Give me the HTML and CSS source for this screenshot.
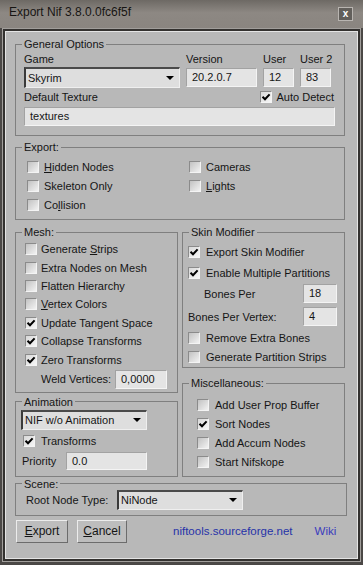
FILE: index.html
```html
<!DOCTYPE html>
<html lang="en">

<head>
    <meta charset="UTF-8">
    <title>Export Nif 3.8.0.0fc6f5f</title>
    <link rel="stylesheet" href="styles.css">
</head>

<body>
    <div class="window">
        <div class="titlebar">
            <span class="title">Export Nif 3.8.0.0fc6f5f</span>
            <span class="close">x</span>
        </div>

        <div class="client">
            <div class="panel">

                <fieldset class="group general">
                    <legend>General Options</legend>
                    <div class="general-grid">
                        <span>Game</span>
                        <span>Version</span>
                        <span>User</span>
                        <span>User 2</span>
                        <div class="combo">Skyrim<i class="arrow"></i></div>
                        <div class="field">20.2.0.7</div>
                        <div class="field">12</div>
                        <div class="field">83</div>
                    </div>
                    <div class="texture-row">
                        <span>Default Texture</span>
                        <label class="check">
                            <span class="box on"><svg viewBox="0 0 10 10"><path d="M1.5 4.8 L4 7.3 L8.6 2.4" /></svg></span>
                            Auto Detect
                        </label>
                    </div>
                    <div class="field texture">textures</div>
                </fieldset>

                <fieldset class="group export">
                    <legend>Export:</legend>
                    <div class="export-grid">
                        <label class="check"><span class="box"></span><span><u>H</u>idden Nodes</span></label>
                        <label class="check"><span class="box"></span>Cameras</label>
                        <label class="check"><span class="box"></span>Skeleton Only</label>
                        <label class="check"><span class="box"></span><span><u>L</u>ights</span></label>
                        <label class="check"><span class="box"></span><span>Co<u>l</u>lision</span></label>
                    </div>
                </fieldset>

                <div class="columns">
                    <div class="col">
                        <fieldset class="group mesh">
                            <legend>Mesh:</legend>
                            <div class="list">
                                <label class="check"><span class="box"></span><span>Generate <u>S</u>trips</span></label>
                                <label class="check"><span class="box"></span>Extra Nodes on Mesh</label>
                                <label class="check"><span class="box"></span>Flatten Hierarchy</label>
                                <label class="check"><span class="box"></span><span><u>V</u>ertex Colors</span></label>
                                <label class="check"><span class="box on"><svg viewBox="0 0 10 10"><path d="M1.5 4.8 L4 7.3 L8.6 2.4" /></svg></span>Update Tangent Space</label>
                                <label class="check"><span class="box on"><svg viewBox="0 0 10 10"><path d="M1.5 4.8 L4 7.3 L8.6 2.4" /></svg></span>Collapse Transforms</label>
                                <label class="check"><span class="box on"><svg viewBox="0 0 10 10"><path d="M1.5 4.8 L4 7.3 L8.6 2.4" /></svg></span>Zero Transforms</label>
                            </div>
                            <div class="weld-row">
                                <span>Weld Vertices:</span>
                                <span class="field">0,0000</span>
                            </div>
                        </fieldset>

                        <fieldset class="group anim">
                            <legend>Animation</legend>
                            <div class="combo anim-combo">NIF w/o Animation<i class="arrow"></i></div>
                            <label class="check"><span class="box on"><svg viewBox="0 0 10 10"><path d="M1.5 4.8 L4 7.3 L8.6 2.4" /></svg></span>Transforms</label>
                            <div class="prio-row">
                                <span>Priority</span>
                                <span class="field">0.0</span>
                            </div>
                        </fieldset>
                    </div>

                    <div class="col">
                        <fieldset class="group skin">
                            <legend>Skin Modifier</legend>
                            <label class="check first"><span class="box on"><svg viewBox="0 0 10 10"><path d="M1.5 4.8 L4 7.3 L8.6 2.4" /></svg></span>Export Skin Modifier</label>
                            <label class="check"><span class="box on"><svg viewBox="0 0 10 10"><path d="M1.5 4.8 L4 7.3 L8.6 2.4" /></svg></span>Enable Multiple Partitions</label>
                            <div class="num-row indent">
                                <span>Bones Per</span>
                                <span class="field num">18</span>
                            </div>
                            <div class="num-row vertex">
                                <span>Bones Per Vertex:</span>
                                <span class="field num">4</span>
                            </div>
                            <label class="check low gap"><span class="box"></span>Remove Extra Bones</label>
                            <label class="check low"><span class="box"></span>Generate Partition Strips</label>
                        </fieldset>

                        <fieldset class="group misc">
                            <legend>Miscellaneous:</legend>
                            <div class="list">
                                <label class="check"><span class="box"></span>Add User Prop Buffer</label>
                                <label class="check"><span class="box on"><svg viewBox="0 0 10 10"><path d="M1.5 4.8 L4 7.3 L8.6 2.4" /></svg></span>Sort Nodes</label>
                                <label class="check"><span class="box"></span>Add Accum Nodes</label>
                                <label class="check"><span class="box"></span>Start Nifskope</label>
                            </div>
                        </fieldset>
                    </div>
                </div>

                <fieldset class="group scene">
                    <legend>Scene:</legend>
                    <div class="scene-row">
                        <span>Root Node Type:</span>
                        <div class="combo">NiNode<i class="arrow"></i></div>
                    </div>
                </fieldset>

                <div class="footer">
                    <button class="btn export-btn" type="button"><u>E</u>xport</button>
                    <button class="btn cancel-btn" type="button"><u>C</u>ancel</button>
                    <a class="link site" href="#">niftools.sourceforge.net</a>
                    <a class="link wiki" href="#">Wiki</a>
                </div>

            </div>
        </div>
    </div>
</body>

</html>
```

FILE: styles.css
```css
/* styles.css */

body {
    margin: 0;
    background-color: #3f3d3b;
    font-family: "Liberation Sans", Arial, sans-serif;
    font-size: 11px;
    color: #151515;
}

.window {
    width: 363px;
    height: 565px;
    display: flex;
    flex-direction: column;
    background-color: #4b4846;
}

/* title bar */

.titlebar {
    height: 28px;
    flex: none;
    box-sizing: border-box;
    display: flex;
    justify-content: space-between;
    align-items: flex-start;
    padding: 5px 9px 0 9px;
    background: linear-gradient(#6d6964, #8d8883 45%, #8a8580);
}

.title {
    font-size: 12px;
    line-height: 15px;
    color: #171513;
}

.close {
    width: 15px;
    height: 14px;
    box-sizing: border-box;
    margin-top: 2px;
    margin-right: 1px;
    border: 1px solid #b9b5b1;
    background-color: #625f5b;
    color: #fff;
    font-weight: bold;
    font-size: 10px;
    line-height: 11px;
    text-align: center;
}

/* window frame */

.client {
    flex: 1;
    display: flex;
    margin: 0 2px 3px 2px;
    border: 1px solid #a19e9b;
}

.panel {
    flex: 1;
    border: 2px solid #33312f;
    box-shadow: inset 1px 1px 0 #e4e4e4, inset -1px -1px 0 #e4e4e4;
    background-color: #b8b8b8;
    padding: 6px 13px 0 10px;
}

/* group boxes */

.group {
    margin: 0;
    padding: 0 9px 7px 8px;
    border: 1px solid #7f7f7f;
    min-width: 0;
}

.group legend {
    padding: 0 2px;
    margin-left: -2px;
    line-height: 14px;
}

/* controls */

.field {
    display: block;
    height: 19px;
    box-sizing: border-box;
    background-color: #e4e4e4;
    border: 1px solid;
    border-color: #a2a2a2 #f4f4f4 #f4f4f4 #a2a2a2;
    padding: 0 5px;
    line-height: 17px;
}

.combo {
    height: 21px;
    box-sizing: border-box;
    display: flex;
    align-items: center;
    justify-content: space-between;
    padding: 0 5px 0 2px;
    background-color: #dedede;
    border-style: solid;
    border-width: 2px 1px 1px 2px;
    border-color: #4a4a4a #efefef #efefef #3a3a3a;
}

.arrow {
    width: 0;
    height: 0;
    border-left: 4px solid transparent;
    border-right: 4px solid transparent;
    border-top: 4px solid #000;
}

.check {
    display: flex;
    align-items: center;
    gap: 5px;
}

.box {
    width: 12px;
    height: 12px;
    flex: none;
    box-sizing: border-box;
    display: flex;
    align-items: center;
    justify-content: center;
    border: 1px solid;
    border-color: #8b8b8b #f4f4f4 #f4f4f4 #8b8b8b;
    background: linear-gradient(135deg, #c2c2c2, #f2f2f2);
}

.box.on {
    background: linear-gradient(135deg, #d8d8d8, #f6f6f6);
}

.box svg {
    width: 10px;
    height: 10px;
}

.box svg path {
    fill: none;
    stroke: #000;
    stroke-width: 2;
}

/* general options */

.general {
    padding-bottom: 9px;
}

.general-grid {
    display: grid;
    grid-template-columns: 156px 71px 31px 31px;
    grid-template-rows: 14px 21px;
    column-gap: 6px;
    row-gap: 1px;
    align-items: center;
    padding-top: 1px;
}

.general-grid span {
    line-height: 14px;
    white-space: nowrap;
}

.texture-row {
    height: 18px;
    display: flex;
    align-items: center;
    justify-content: space-between;
}

.texture-row .check {
    margin-right: 1px;
}

.texture {
    margin-top: 1px;
}

/* export */

.export {
    margin-top: 4px;
    padding-bottom: 5px;
}

.export-grid {
    display: grid;
    grid-template-columns: 162px 1fr;
    grid-auto-rows: 19px;
    padding-top: 3px;
}

.export-grid .check {
    margin-left: 3px;
}

/* mesh / skin columns */

.columns {
    display: grid;
    grid-template-columns: 163px 163px;
    column-gap: 4px;
    margin-top: 5px;
}

.col {
    display: flex;
    flex-direction: column;
}

.mesh {
    padding-bottom: 3px;
}

.mesh .list {
    padding-top: 1px;
}

.mesh .check {
    height: 18.4px;
    margin-left: 1px;
    gap: 4px;
}

.weld-row {
    display: grid;
    grid-template-columns: 74px 52px;
    align-items: center;
    margin: 1px 0 0 17px;
}

.anim {
    flex: 1;
    margin-top: 2px;
    padding-bottom: 5px;
}

.anim-combo {
    width: 126px;
    height: 20px;
    margin: 1px 0 0 -3px;
}

.anim .check {
    height: 18px;
    margin: 2px 0 0 -1px;
    gap: 6px;
}

.prio-row {
    display: grid;
    grid-template-columns: 44px 81px;
    align-items: center;
    height: 19px;
    margin: 2px 0 0 -2px;
}

.prio-row .field {
    height: 18px;
    line-height: 16px;
}

.skin {
    padding: 0 7px 1px 8px;
}

.skin .check {
    height: 20px;
    margin: 1px 0 0 -3px;
    gap: 6px;
}

.skin .check.first {
    margin-top: 3px;
}

.skin .check.low {
    height: 19px;
    margin-top: 0;
}

.skin .check.gap {
    margin-top: 2px;
}

.num-row {
    display: flex;
    align-items: center;
    justify-content: space-between;
    height: 19px;
    margin-left: -3px;
}

.num-row.indent {
    margin-top: 1px;
    padding-left: 16px;
}

.num-row.vertex {
    margin-top: 4px;
}

.num {
    width: 34px;
}

.misc {
    flex: 1;
    margin-top: 8px;
    padding-bottom: 4px;
}

.misc .list {
    padding-top: 5px;
}

.misc .check {
    height: 19px;
    margin-left: 6px;
    gap: 6px;
}

/* scene */

.scene {
    margin: 0 -2px 0 0;
    padding-bottom: 5px;
}

.scene-row {
    display: grid;
    grid-template-columns: 91px 126px;
    align-items: center;
    margin: -1px 0 0 2px;
}

.scene-row .combo {
    height: 20px;
}

/* footer */

.footer {
    display: flex;
    align-items: center;
    margin-top: 4px;
    padding-left: 1px;
}

.btn {
    height: 23px;
    box-sizing: border-box;
    padding: 0;
    background-color: #bdbdbd;
    border: 1px solid;
    border-color: #ececec #6c6c6c #6c6c6c #ececec;
    font-family: "Liberation Sans", Arial, sans-serif;
    font-size: 12px;
    color: #151515;
}

.export-btn {
    width: 52px;
}

.cancel-btn {
    width: 50px;
    margin-left: 9px;
}

.link {
    font-size: 11.5px;
    text-decoration: none;
}

.site {
    margin-left: 46px;
    color: #2633a8;
}

.wiki {
    margin-left: 22px;
    color: #3a3bbd;
}
```
